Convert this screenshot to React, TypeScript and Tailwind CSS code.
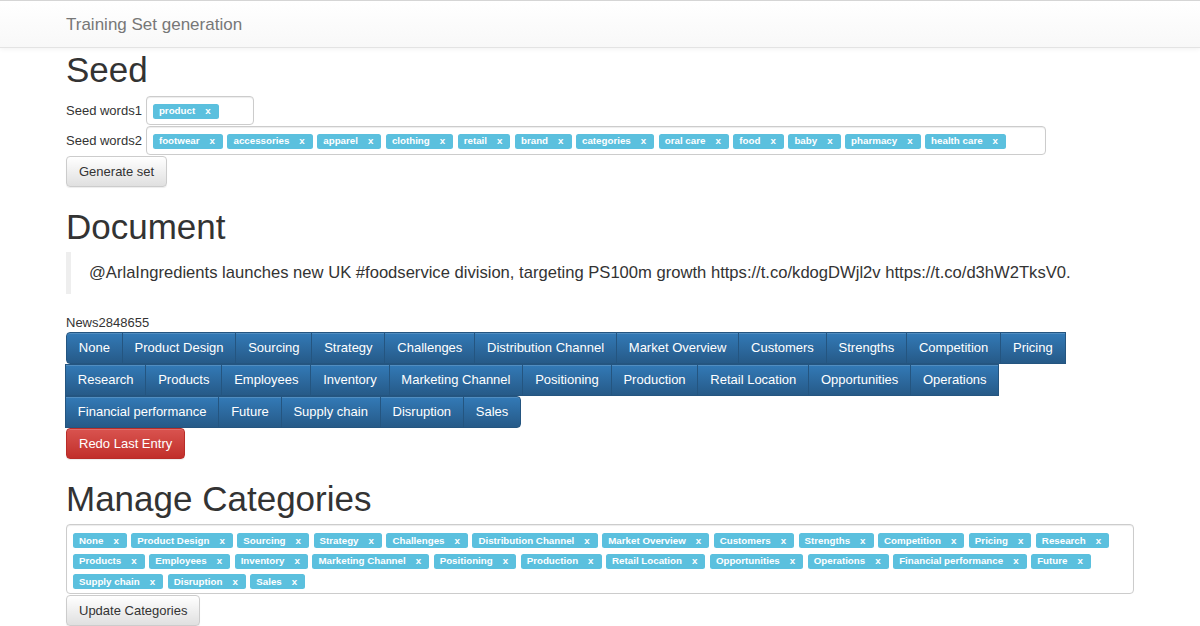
import React from 'react';

// Rows are fixed so the wrapping matches the screenshot
const BUTTON_ROWS: string[][] = [
  ['None', 'Product Design', 'Sourcing', 'Strategy', 'Challenges', 'Distribution Channel', 'Market Overview', 'Customers', 'Strengths', 'Competition', 'Pricing'],
  ['Research', 'Products', 'Employees', 'Inventory', 'Marketing Channel', 'Positioning', 'Production', 'Retail Location', 'Opportunities', 'Operations'],
  ['Financial performance', 'Future', 'Supply chain', 'Disruption', 'Sales'],
];

const CATEGORY_ROWS: string[][] = [
  ['None', 'Product Design', 'Sourcing', 'Strategy', 'Challenges', 'Distribution Channel', 'Market Overview', 'Customers', 'Strengths', 'Competition', 'Pricing', 'Research'],
  ['Products', 'Employees', 'Inventory', 'Marketing Channel', 'Positioning', 'Production', 'Retail Location', 'Opportunities', 'Operations', 'Financial performance', 'Future'],
  ['Supply chain', 'Disruption', 'Sales'],
];

const SEED_1 = ['product'];
const SEED_2 = ['footwear', 'accessories', 'apparel', 'clothing', 'retail', 'brand', 'categories', 'oral care', 'food', 'baby', 'pharmacy', 'health care'];

function Tag({ label }: { label: string }) {
  return (
    <span className="inline-flex items-center whitespace-nowrap rounded-[2.5px] bg-[#5bc0de] px-[6px] pt-[2.5px] pb-[2.5px] text-[9.75px] font-bold leading-[10px] text-white">
      {label}
      <span className="ml-[8px] px-[2px]">x</span>
    </span>
  );
}

function DefaultButton({ children }: { children: React.ReactNode }) {
  return (
    <button className="block rounded-[4px] border border-[#ccc] bg-linear-to-b from-white to-[#e0e0e0] px-[12px] py-[6px] text-[13px] leading-[17px] text-[#333] shadow-[inset_0_1px_0_rgba(255,255,255,0.15),0_1px_1px_rgba(0,0,0,0.075)]">
      {children}
    </button>
  );
}

function SeedRow({ label, tags, boxClass }: { label: string; tags: string[]; boxClass: string }) {
  return (
    <div className="flex items-center">
      <span className="mr-[4px] text-[13px] leading-[18px] text-[#333]">{label}</span>
      <div className={`flex h-[29px] items-center gap-x-[4.5px] rounded-[4px] border border-[#ccc] px-[6px] pt-px shadow-[inset_0_1px_1px_rgba(0,0,0,0.075)] ${boxClass}`}>
        {tags.map((t) => (
          <Tag key={t} label={t} />
        ))}
      </div>
    </div>
  );
}

export default function App() {
  const total = BUTTON_ROWS.flat().length;
  let idx = 0;

  return (
    <div className="min-h-[626px] bg-white font-['Liberation_Sans',Arial,sans-serif] text-[#333]">
      {/* Navbar */}
      <div className="flex h-[48px] items-center border-t border-b border-t-[#d5d5d5] border-b-[#e3e3e3] bg-linear-to-b from-white to-[#f8f8f8] pt-[2px] pl-[66px] shadow-[0_1px_5px_rgba(0,0,0,0.06)]">
        <span className="text-[17px] text-[#777]">Training Set generation</span>
      </div>

      <div className="px-[66px]">
        {/* Seed */}
        <h1 className="mt-[2px] text-[35px] leading-[40px] text-[#333]">Seed</h1>
        <div className="mt-[6px]">
          <SeedRow label="Seed words1" tags={SEED_1} boxClass="w-[108px]" />
          <div className="mt-px">
            <SeedRow label="Seed words2" tags={SEED_2} boxClass="w-[900px]" />
          </div>
        </div>
        <div className="mt-px flex">
          <DefaultButton>Generate set</DefaultButton>
        </div>

        {/* Document */}
        <h1 className="mt-[20px] text-[35px] leading-[40px] text-[#333]">Document</h1>
        <blockquote className="mt-[5px] border-l-[5px] border-[#eee] py-[10px] pl-[18px] text-[16.6px] leading-[22px] text-[#333]">
          @ArlaIngredients launches new UK #foodservice division, targeting PS100m growth https://t.co/kdogDWjl2v https://t.co/d3hW2TksV0.
        </blockquote>

        <div className="mt-[20px] text-[13px] leading-[18px]">News2848655</div>
        <div className="flex flex-col">
          {BUTTON_ROWS.map((row, r) => (
            <div key={r} className="flex">
              {row.map((name) => {
                const i = idx++;
                const first = i === 0;
                const last = i === total - 1;
                return (
                  <button
                    key={name}
                    className={`whitespace-nowrap border border-[#245580] bg-linear-to-b from-[#337ab7] to-[#265a88] px-[11.85px] py-[6px] text-[13px] leading-[18px] text-white shadow-[inset_0_1px_0_rgba(255,255,255,0.15)] ${first ? 'rounded-l-[4px]' : '-ml-px'} ${last ? 'rounded-r-[4px]' : ''}`}
                  >
                    {name}
                  </button>
                );
              })}
            </div>
          ))}
        </div>
        <div className="flex">
          <button className="rounded-[4px] border border-[#b92c28] bg-linear-to-b from-[#d9534f] to-[#c12e2a] px-[12px] py-[6px] text-[13px] leading-[17px] text-white shadow-[inset_0_1px_0_rgba(255,255,255,0.15),0_1px_1px_rgba(0,0,0,0.075)]">
            Redo Last Entry
          </button>
        </div>

        {/* Manage Categories */}
        <h1 className="mt-[20px] text-[35px] leading-[40px] text-[#333]">Manage Categories</h1>
        <div className="mt-[5px] flex flex-col gap-y-[5.5px] rounded-[4px] border border-[#ccc] px-[6px] pt-[8px] pb-[4px] shadow-[inset_0_1px_1px_rgba(0,0,0,0.075)]">
          {CATEGORY_ROWS.map((row, r) => (
            <div key={r} className="flex gap-x-[4.5px]">
              {row.map((t) => (
                <Tag key={t} label={t} />
              ))}
            </div>
          ))}
        </div>
        <div className="mt-px flex">
          <DefaultButton>Update Categories</DefaultButton>
        </div>
      </div>
    </div>
  );
}
